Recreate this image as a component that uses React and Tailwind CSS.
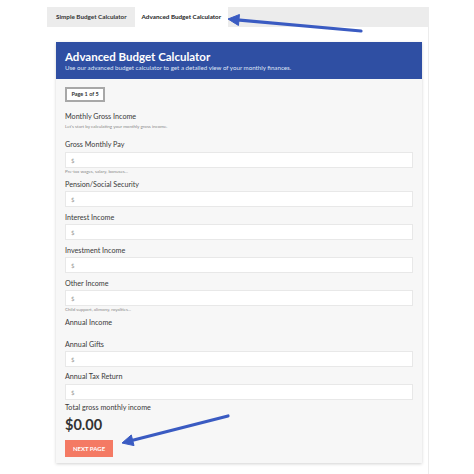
import React from 'react';

const font = { fontFamily: 'Lato, "Noto Sans", sans-serif' };

const Label = ({ children, className = '' }) => (
    <div className={`text-[7.2px] leading-[10px] text-[#3a3a3a] ${className}`}>{children}</div>
);

const Hint = ({ children, className = '' }) => (
    <div className={`text-[4.5px] leading-[6px] text-[#8a8a8a] ${className}`}>{children}</div>
);

const Money = ({ className = '' }) => (
    <div className={`h-[16px] bg-white border border-[#e8e8e8] flex items-center pl-[5px] text-[6px] text-[#9a9a9a] ${className}`}>
        $
    </div>
);

// blue hand-drawn style arrows laid over the screenshot
const Arrow = ({ x1, y1, x2, y2 }) => {
    const dx = x2 - x1;
    const dy = y2 - y1;
    const len = Math.sqrt(dx * dx + dy * dy);
    const ux = dx / len;
    const uy = dy / len;
    const hl = 11;
    const hw = 5.5;
    const bx = x2 - ux * hl;
    const by = y2 - uy * hl;
    const p1 = `${bx - uy * hw},${by + ux * hw}`;
    const p2 = `${bx + uy * hw},${by - ux * hw}`;
    return (
        <g>
            <line x1={x1} y1={y1} x2={bx + ux * 2} y2={by + uy * 2} stroke="#3a5bc2" strokeWidth="3.2" strokeLinecap="round" />
            <polygon points={`${x2},${y2} ${p1} ${p2}`} fill="#3a5bc2" stroke="#3a5bc2" strokeWidth="1" strokeLinejoin="round" />
        </g>
    );
};

export default function App() {
    return (
        <div className="relative w-[474px] h-[474px] bg-white overflow-hidden" style={font}>
            <div className="ml-[47px] mt-[7px] w-[382px] h-[467px] border-r border-[#ececec] bg-white">
                {/* Tabs */}
                <div className="flex h-[20px] bg-[#ececec]">
                    <div className="flex items-center pl-[9px] pr-[8px] text-[6.3px] font-bold text-[#333]">
                        Simple Budget Calculator
                    </div>
                    <div className="flex items-center px-[7px] bg-white text-[6.3px] font-bold text-[#222]">
                        Advanced Budget Calculator
                    </div>
                </div>

                {/* Card */}
                <div className="ml-[9px] mt-[15px] w-[366px] bg-[#f7f7f7] shadow-[0_1px_3px_rgba(0,0,0,0.18)]">
                    <div className="h-[37px] bg-[#2f4fa3] px-[9px] flex flex-col justify-center">
                        <div className="text-[11.5px] leading-[14px] font-bold text-white">
                            Advanced Budget Calculator
                        </div>
                        <div className="text-[6.2px] leading-[8px] text-[#dfe5f5]">
                            Use our advanced budget calculator to get a detailed view of your monthly finances.
                        </div>
                    </div>

                    <div className="px-[9px] pt-[8px] pb-[6px]">
                        <div className="w-[40px] h-[15px] border-2 border-[#a8a8a8] bg-white flex items-center justify-center text-[5.5px] font-bold text-[#333]">
                            Page 1 of 5
                        </div>

                        <Label className="mt-[10px]">Monthly Gross Income</Label>
                        <Hint className="mt-[2px]">Let's start by calculating your monthly gross income.</Hint>

                        <Label className="mt-[10px]">Gross Monthly Pay</Label>
                        <Money className="mt-[2px]" />
                        <Hint className="mt-[1px]">Pre-tax wages, salary, bonuses...</Hint>

                        <Label className="mt-[5px]">Pension/Social Security</Label>
                        <Money className="mt-[1px]" />

                        <Label className="mt-[6px]">Interest Income</Label>
                        <Money className="mt-[1px]" />

                        <Label className="mt-[6px]">Investment Income</Label>
                        <Money className="mt-[1px]" />

                        <Label className="mt-[6px]">Other Income</Label>
                        <Money className="mt-[1px]" />
                        <Hint className="mt-[1px]">Child support, alimony, royalties...</Hint>

                        <Label className="mt-[5px]">Annual Income</Label>

                        <Label className="mt-[12px]">Annual Gifts</Label>
                        <Money className="mt-[1px]" />

                        <Label className="mt-[5px]">Annual Tax Return</Label>
                        <Money className="mt-[2px]" />

                        <Label className="mt-[3px]">Total gross monthly income</Label>
                        <div className="mt-[2px] text-[14.5px] leading-[20px] font-bold text-[#333]">$0.00</div>

                        <button className="mt-[5px] w-[48px] h-[17px] bg-[#f47a64] text-white text-[6px] font-bold flex items-center justify-center">
                            NEXT PAGE
                        </button>
                    </div>
                </div>
            </div>

            <svg className="absolute inset-0 pointer-events-none" width="474" height="474" viewBox="0 0 474 474">
                <Arrow x1={361} y1={31} x2={228} y2={19} />
                <Arrow x1={228} y1={416} x2={122} y2={443} />
            </svg>
        </div>
    );
}
